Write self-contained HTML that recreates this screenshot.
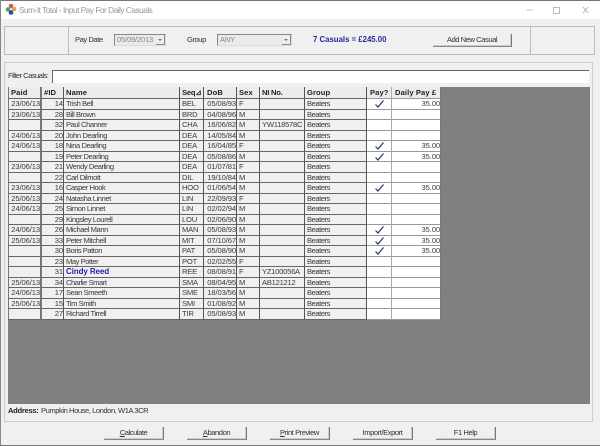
<!DOCTYPE html>
<html><head><meta charset="utf-8"><style>
html,body{margin:0;padding:0;width:600px;height:446px;overflow:hidden;background:#f0f0f0}
*{box-sizing:border-box}
body{font-family:"Liberation Sans",sans-serif;font-size:7.6px;color:#333;letter-spacing:-.45px}
#w{position:absolute;left:0;top:0;width:600px;height:446px;filter:blur(.35px);background:#f0f0f0}
.a{position:absolute;white-space:nowrap}
.btn{position:absolute;height:13px;background:#f0f0f0;border-right:1px solid #777;border-bottom:1px solid #888;box-shadow:inset -1px -1px 0 #ccc;text-align:center;line-height:12px;color:#333}
.combo{position:absolute;height:12px;border:1px solid #888;border-right-color:#ddd;border-bottom-color:#ddd;background:#eaeaea;color:#888;line-height:10px;padding-left:2px;letter-spacing:-.2px}
.combo i{position:absolute;right:0;top:0;width:9px;height:10px;background:#eee;border-right:1px solid #888;border-bottom:1px solid #888}
.combo i:after{content:"";position:absolute;left:2px;top:4px;border:2px solid transparent;border-top:2px solid #777;border-bottom:0}
#grid{position:absolute;left:8px;top:87px;width:581.5px;height:317px;background:#808080}
.r{display:flex;height:10.5px;width:433px}
.r div{height:100%;border-right:1px solid #555;border-bottom:1px solid #666;background:#f0f0f0;line-height:9.5px;padding:0 0 0 2px;overflow:hidden;white-space:nowrap;color:#3a3a3a}
.h{height:12px!important}
.h div{font-weight:bold;color:#222;line-height:11px;background:#ececec;letter-spacing:.1px}
.r div:nth-child(1){width:34px;text-align:right;border-left:1px solid #777;border-right:2px solid #777;padding:0;letter-spacing:-.1px}
.r div:nth-child(2){width:22px;text-align:right;padding:0;letter-spacing:-.1px}
.r div:nth-child(3){width:116px}
.r div:nth-child(4){width:24px;letter-spacing:-.2px}
.r div:nth-child(5){width:33px;text-align:right;padding:0;letter-spacing:-.1px}
.r div:nth-child(6){width:23px}
.r div:nth-child(7){width:45px;letter-spacing:-.25px}
.r div:nth-child(8){width:62px}
.r div:nth-child(9){width:25px;background:#fff;border-right:1px solid #aaa;border-bottom:1px solid #999;padding:0;position:relative}
.r div:nth-child(10){width:49px;background:#fff;text-align:right;border-right:1px solid #777;border-bottom:1px solid #999;padding:0;letter-spacing:-.1px}
.r svg{position:absolute;left:8px;top:1px}
.h div:nth-child(1),.h div:nth-child(2),.h div:nth-child(5){text-align:left;padding-left:2px;letter-spacing:.1px}
.h div:nth-child(5){padding-left:3px}
.h div:nth-child(9){background:#ececec;padding-left:3px}
.h div:nth-child(10){background:#ececec;text-align:left;padding-left:3px;letter-spacing:.1px}
</style></head><body><div id="w">
<div class="a" style="left:0;top:0;width:600px;height:19px;background:#fff;border-top:1px solid #777"></div>
<div class="a" style="left:0;top:0;width:1px;height:446px;background:#888"></div>
<div class="a" style="left:0;top:445px;width:600px;height:1px;background:#777"></div>
<svg class="a" style="left:5px;top:3px" width="12" height="12" viewBox="0 0 12 12"><circle cx="6" cy="3" r="2.3" fill="#d8505a"/><circle cx="3" cy="6.500" r="2.300" fill="#4aa860"/><circle cx="9" cy="6" r="2.300" fill="#e8a030"/><circle cx="6" cy="9.500" r="2.300" fill="#3040b0"/></svg>
<div class="a" style="left:19px;top:5px;font-size:8.3px;color:#999;line-height:10px;letter-spacing:-.5px">Sum-It Total - Input Pay For Daily Casuals</div>
<svg class="a" style="left:520px;top:4px" width="80" height="12" viewBox="0 0 80 12" fill="none" stroke="#bbb"><path d="M6.500 6H12.500"/><rect x="33.500" y="3.500" width="6" height="6"/><path d="M63 3L68 9M68 3L63 9"/></svg>

<div class="a" style="left:4px;top:26px;width:591px;height:29px;border:1px solid #bbb"></div>
<div class="a" style="left:68px;top:26px;width:1px;height:29px;background:#bbb"></div>
<div class="a" style="left:530px;top:26px;width:1px;height:29px;background:#bbb"></div>
<div class="a" style="left:75px;top:35px;line-height:10px">Pay Date</div>
<div class="combo" style="left:114px;top:34px;width:52px">05/09/2013<i></i></div>
<div class="a" style="left:187px;top:35px;line-height:10px">Group</div>
<div class="combo" style="left:217px;top:34px;width:75px">ANY<i></i></div>
<div class="a" style="left:313px;top:35px;line-height:10px;font-weight:bold;color:#2a2a9a;font-size:7.8px;letter-spacing:0">7 Casuals = £245.00</div>
<div class="btn" style="left:433px;top:34px;width:79px">Add New Casual</div>

<div class="a" style="left:4px;top:62px;width:589px;height:360px;border:1px solid #ccc"></div>
<div class="a" style="left:8px;top:71px;line-height:10px;letter-spacing:-.55px">Filter Casuals:</div>
<div class="a" style="left:52px;top:70px;width:537px;height:13px;background:#fff;border-top:1px solid #666;border-left:1px solid #666"></div>

<div id="grid">
<div class="r h"><div>Paid</div><div>#ID</div><div>Name</div><div>Seq&#8895;</div><div>DoB</div><div>Sex</div><div>NI No.</div><div>Group</div><div>Pay?</div><div>Daily Pay £</div></div>
<div class="r"><div>23/06/13</div><div>14</div><div>Trish Bell</div><div>BEL</div><div>05/08/93</div><div>F</div><div></div><div>Beaters</div><div><svg width="9" height="8" viewBox="0 0 9 8"><path d="M0.500 4.500L3 7L8.500 0.500" fill="none" stroke="#223366" stroke-width="1.200"/></svg></div><div>35.00</div></div>
<div class="r"><div>23/06/13</div><div>28</div><div>Bill Brown</div><div>BRD</div><div>04/08/96</div><div>M</div><div></div><div>Beaters</div><div></div><div></div></div>
<div class="r"><div></div><div>32</div><div>Paul Channer</div><div>CHA</div><div>16/06/82</div><div>M</div><div>YW118578C</div><div>Beaters</div><div></div><div></div></div>
<div class="r"><div>24/06/13</div><div>20</div><div>John Dearling</div><div>DEA</div><div>14/05/84</div><div>M</div><div></div><div>Beaters</div><div></div><div></div></div>
<div class="r"><div>24/06/13</div><div>18</div><div>Nina Dearling</div><div>DEA</div><div>16/04/85</div><div>F</div><div></div><div>Beaters</div><div><svg width="9" height="8" viewBox="0 0 9 8"><path d="M0.500 4.500L3 7L8.500 0.500" fill="none" stroke="#223366" stroke-width="1.200"/></svg></div><div>35.00</div></div>
<div class="r"><div></div><div>19</div><div>Peter Dearling</div><div>DEA</div><div>05/08/86</div><div>M</div><div></div><div>Beaters</div><div><svg width="9" height="8" viewBox="0 0 9 8"><path d="M0.500 4.500L3 7L8.500 0.500" fill="none" stroke="#223366" stroke-width="1.200"/></svg></div><div>35.00</div></div>
<div class="r"><div>23/06/13</div><div>21</div><div>Wendy Dearling</div><div>DEA</div><div>01/07/81</div><div>F</div><div></div><div>Beaters</div><div></div><div></div></div>
<div class="r"><div></div><div>22</div><div>Carl Dilmott</div><div>DIL</div><div>19/10/84</div><div>M</div><div></div><div>Beaters</div><div></div><div></div></div>
<div class="r"><div>23/06/13</div><div>16</div><div>Casper Hook</div><div>HOO</div><div>01/06/54</div><div>M</div><div></div><div>Beaters</div><div><svg width="9" height="8" viewBox="0 0 9 8"><path d="M0.500 4.500L3 7L8.500 0.500" fill="none" stroke="#223366" stroke-width="1.200"/></svg></div><div>35.00</div></div>
<div class="r"><div>25/06/13</div><div>24</div><div>Natasha Linnet</div><div>LIN</div><div>22/09/93</div><div>F</div><div></div><div>Beaters</div><div></div><div></div></div>
<div class="r"><div>24/06/13</div><div>25</div><div>Simon Linnet</div><div>LIN</div><div>02/02/94</div><div>M</div><div></div><div>Beaters</div><div></div><div></div></div>
<div class="r"><div></div><div>29</div><div>Kingsley Lourell</div><div>LOU</div><div>02/06/90</div><div>M</div><div></div><div>Beaters</div><div></div><div></div></div>
<div class="r"><div>24/06/13</div><div>26</div><div>Michael Mann</div><div>MAN</div><div>05/08/93</div><div>M</div><div></div><div>Beaters</div><div><svg width="9" height="8" viewBox="0 0 9 8"><path d="M0.500 4.500L3 7L8.500 0.500" fill="none" stroke="#223366" stroke-width="1.200"/></svg></div><div>35.00</div></div>
<div class="r"><div>25/06/13</div><div>33</div><div>Peter Mitchell</div><div>MIT</div><div>07/10/67</div><div>M</div><div></div><div>Beaters</div><div><svg width="9" height="8" viewBox="0 0 9 8"><path d="M0.500 4.500L3 7L8.500 0.500" fill="none" stroke="#223366" stroke-width="1.200"/></svg></div><div>35.00</div></div>
<div class="r"><div></div><div>30</div><div>Boris Patton</div><div>PAT</div><div>05/08/90</div><div>M</div><div></div><div>Beaters</div><div><svg width="9" height="8" viewBox="0 0 9 8"><path d="M0.500 4.500L3 7L8.500 0.500" fill="none" stroke="#223366" stroke-width="1.200"/></svg></div><div>35.00</div></div>
<div class="r"><div></div><div>23</div><div>May Potter</div><div>POT</div><div>02/02/55</div><div>F</div><div></div><div>Beaters</div><div></div><div></div></div>
<div class="r"><div></div><div>31</div><div style="font-weight:bold;color:#2222aa;font-size:8px;letter-spacing:-.1px">Cindy Reed</div><div>REE</div><div>08/08/91</div><div>F</div><div>YZ100056A</div><div>Beaters</div><div></div><div></div></div>
<div class="r"><div>25/06/13</div><div>34</div><div>Charlie Smart</div><div>SMA</div><div>08/04/95</div><div>M</div><div>AB121212</div><div>Beaters</div><div></div><div></div></div>
<div class="r"><div>24/06/13</div><div>17</div><div>Sean Smeeth</div><div>SME</div><div>18/03/56</div><div>M</div><div></div><div>Beaters</div><div></div><div></div></div>
<div class="r"><div>25/06/13</div><div>15</div><div>Tim Smith</div><div>SMI</div><div>01/08/92</div><div>M</div><div></div><div>Beaters</div><div></div><div></div></div>
<div class="r"><div></div><div>27</div><div>Richard Tirrell</div><div>TIR</div><div>05/08/93</div><div>M</div><div></div><div>Beaters</div><div></div><div></div></div>
</div>

<div class="a" style="left:8px;top:406px;line-height:10px;font-weight:bold;color:#222;letter-spacing:-.3px">Address:</div>
<div class="a" style="left:41px;top:406px;line-height:10px">Pumpkin House, London, W1A 3CR</div>

<div class="btn" style="left:104px;top:427px;width:60px"><u>C</u>alculate</div>
<div class="btn" style="left:187px;top:427px;width:60px"><u>A</u>bandon</div>
<div class="btn" style="left:270px;top:427px;width:60px"><u>P</u>rint Preview</div>
<div class="btn" style="left:353px;top:427px;width:60px">Import/Export</div>
<div class="btn" style="left:436px;top:427px;width:60px">F1 Help</div>
</div></body></html>
